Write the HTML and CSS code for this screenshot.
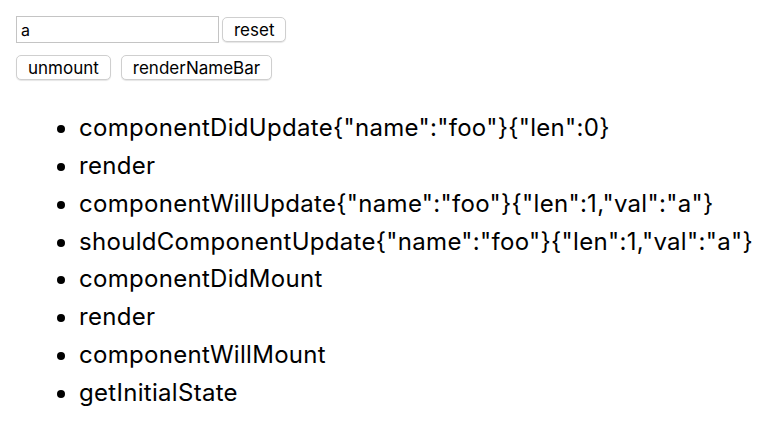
FILE: index.html
```html
<!DOCTYPE html>
<html>
<head>
<meta charset="utf-8">
<link rel="stylesheet" href="styles.css">
</head>
<body>
<div class="app">
  <div class="row row-top">
    <input class="field" type="text" value="a">
    <button class="btn">reset</button>
  </div>
  <div class="row row-second">
    <button class="btn">unmount</button>
    <button class="btn">renderNameBar</button>
  </div>
  <ul class="log">
    <li>componentDidUpdate{"name":"foo"}{"len":0}</li>
    <li>render</li>
    <li>componentWillUpdate{"name":"foo"}{"len":1,"val":"a"}</li>
    <li>shouldComponentUpdate{"name":"foo"}{"len":1,"val":"a"}</li>
    <li>componentDidMount</li>
    <li>render</li>
    <li>componentWillMount</li>
    <li>getInitialState</li>
  </ul>
</div>
</body>
</html>
```

FILE: styles.css
```css
html, body {
  margin: 0;
  padding: 0;
  background: #ffffff;
  overflow: hidden;
}
.app {
  padding: 16px 0 0 16px;
  font-family: "Inter", "Noto Sans CJK JP", sans-serif;
  color: #000;
}
.row {
  display: flex;
  align-items: center;
}
.row-top {
  gap: 3px;
}
.row-second {
  margin-top: 12px;
  gap: 10px;
}
.field {
  box-sizing: border-box;
  width: 203px;
  height: 27px;
  margin: 0;
  border: 1px solid #c4c4c4;
  padding: 1px 4px 0 4px;
  font-family: "Inter", "Noto Sans CJK JP", sans-serif;
  font-size: 16px;
  color: #000;
  outline: none;
  background: #fff;
}
.btn {
  box-sizing: border-box;
  height: 25px;
  margin: 0;
  padding: 0 11px;
  background: #ffffff;
  border: 1px solid #cfcfcf;
  border-radius: 5px;
  box-shadow: 0 1px 1px rgba(0,0,0,0.10);
  font-family: "Inter", "Noto Sans CJK JP", sans-serif;
  font-size: 17px;
  line-height: 22px;
  color: #000;
}
.log {
  margin: 29px 0 0 0;
  padding-left: 63px;
  font-size: 24px;
  letter-spacing: 0.3px;
  line-height: 37.86px;
  white-space: nowrap;
}
```
